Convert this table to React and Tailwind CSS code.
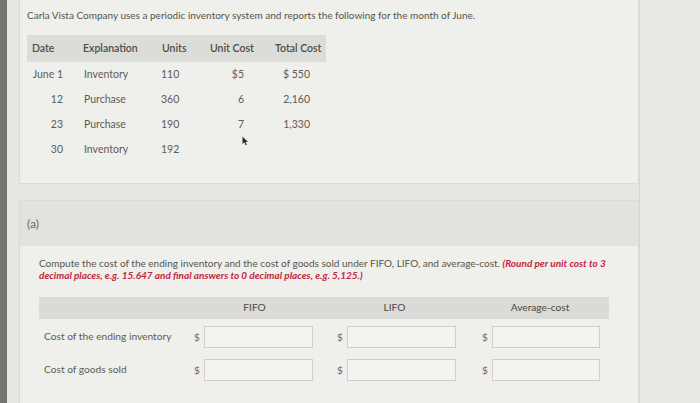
import React from 'react';

const rows = [
  { date: 'June 1', expl: 'Inventory', units: '110', unitCost: '$5', total: '$ 550' },
  { date: '12', expl: 'Purchase', units: '360', unitCost: '6', total: '2,160' },
  { date: '23', expl: 'Purchase', units: '190', unitCost: '7', total: '1,330' },
  { date: '30', expl: 'Inventory', units: '192', unitCost: '', total: '' },
];

const AnswerCell = () => (
  <>
    <span className="text-[10px] text-[#6a6a66] pl-[4px]">$</span>
    <div className="h-[22px] border border-[#cfcfcb] bg-[#f3f3ef]" />
  </>
);

export default function App() {
  return (
    <div className="w-[700px] h-[403px] overflow-hidden flex bg-[#e6e6e2] font-['Lato',sans-serif] text-[#5a5a56] relative">
      {/* dark edge of the monitor */}
      <div className="w-[7px] shrink-0 bg-[#75756f]" />
      <div className="w-[12px] shrink-0" />

      <div className="w-[620px] shrink-0 flex flex-col gap-[16px]">
        {/* Problem statement */}
        <div className="h-[184px] bg-[#efefeb] border border-[#dadad6] border-t-0 px-[7px] pt-[9px]">
          <p className="text-[10px] leading-[12px] text-[#55554f]">
            Carla Vista Company uses a periodic inventory system and reports the following for the month of June.
          </p>

          <div className="mt-[14px] w-[299px]">
            <div className="h-[27px] bg-[#dcdcd8] flex items-center text-[10.5px] font-semibold text-[#4e4e4a]">
              <div className="w-[48px] pl-[5px]">Date</div>
              <div className="w-[80px] pl-[8px]">Explanation</div>
              <div className="w-[45px] pl-[7px]">Units</div>
              <div className="w-[65px] pl-[10px]">Unit Cost</div>
              <div className="w-[61px] pl-[10px]">Total Cost</div>
            </div>
            {rows.map((r) => (
              <div key={r.date} className="h-[25px] flex items-center text-[10.5px] text-[#5c5c58] whitespace-nowrap">
                <div className="w-[48px] pl-[5px]">
                  <div className="w-[31px] text-right">{r.date}</div>
                </div>
                <div className="w-[80px] pl-[9px]">{r.expl}</div>
                <div className="w-[45px] pl-[6px]">{r.units}</div>
                <div className="w-[65px] text-right pr-[21px]">{r.unitCost}</div>
                <div className="w-[61px] text-right pr-[16px]">{r.total}</div>
              </div>
            ))}
          </div>
        </div>

        {/* Part (a) */}
        <div className="flex-1 bg-[#efefeb] border border-[#dadad6] border-b-0 flex flex-col">
          <div className="h-[45px] bg-[#e2e2de] flex items-center px-[7px] text-[12px] text-[#5f6b78]">(a)</div>
          <div className="px-[19px] pt-[11px]">
            <p className="text-[10px] leading-[12px] text-[#55554f]">
              Compute the cost of the ending inventory and the cost of goods sold under FIFO, LIFO, and average-cost.{' '}
              <span className="font-bold italic text-[#c4263f]">
                (Round per unit cost to 3<br />
                decimal places, e.g. 15.647 and final answers to 0 decimal places, e.g. 5,125.)
              </span>
            </p>

            <div className="mt-[16px] w-[570px] grid grid-cols-[151px_14px_109px_20px_14px_109px_22px_14px_108px_9px] text-[10.2px]">
              <div className="col-span-10 grid grid-cols-subgrid h-[22px] bg-[#dadad6] items-center text-[#4a4a46]">
                <div />
                <div className="col-span-2 text-center pl-[6px]">FIFO</div>
                <div />
                <div className="col-span-2 text-center">LIFO</div>
                <div />
                <div className="col-span-2 text-center pl-[2px]">Average-cost</div>
                <div />
              </div>

              <div className="col-span-10 grid grid-cols-subgrid items-center mt-[7px]">
                <div className="pl-[5px] text-[#5c5c58]">Cost of the ending inventory</div>
                <AnswerCell />
                <div />
                <AnswerCell />
                <div />
                <AnswerCell />
                <div />
              </div>

              <div className="col-span-10 grid grid-cols-subgrid items-center mt-[11px]">
                <div className="pl-[5px] text-[#5c5c58]">Cost of goods sold</div>
                <AnswerCell />
                <div />
                <AnswerCell />
                <div />
                <AnswerCell />
                <div />
              </div>
            </div>
          </div>
        </div>
      </div>

      {/* area right of the panels */}
      <div className="flex-1 border-l border-[#d6d6d2] bg-[#e9e9e5]" />

      {/* mouse pointer */}
      <svg className="absolute left-[242px] top-[136px]" width="7" height="10" viewBox="0 0 7 10">
        <path d="M0.5 0.5 L0.5 8 L2.3 6.3 L3.6 9.3 L4.8 8.8 L3.5 5.9 L6 5.9 Z" fill="#2a2a2a" />
      </svg>
    </div>
  );
}
